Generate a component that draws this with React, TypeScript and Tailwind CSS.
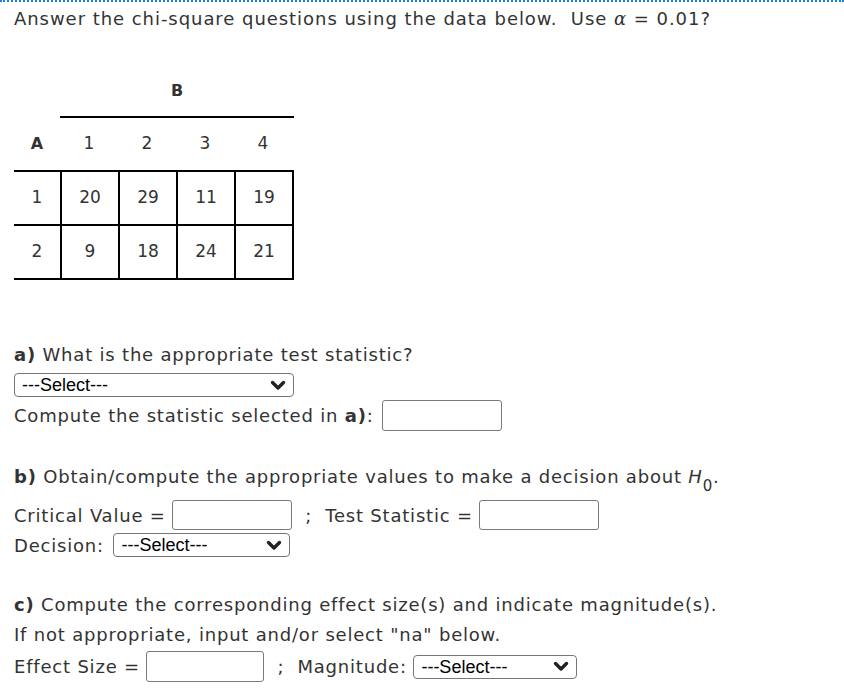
import React from "react";

const font = { fontFamily: '"DejaVu Sans", Verdana, sans-serif' };

function Select({ width }: { width: number }) {
  return (
    <div
      className="h-[24px] border border-[#767676] rounded-[4px] bg-white flex items-center justify-between pl-[7px] pr-[7px] text-[18px] text-black tracking-normal shrink-0"
      style={{ width, fontFamily: '"Liberation Sans", Arial, sans-serif' }}
    >
      <span className="leading-none">---Select---</span>
      <svg width="16" height="11" viewBox="0 0 16 11">
        <path d="M2.5 2.5 L8 8 L13.5 2.5" fill="none" stroke="#222" strokeWidth="3.4" strokeLinecap="round" strokeLinejoin="round" />
      </svg>
    </div>
  );
}

function Input({ width, height = 31 }: { width: number; height?: number }) {
  return (
    <div
      className="border border-[#7a7a7a] rounded-[3px] bg-white shrink-0"
      style={{ width, height }}
    />
  );
}

const H0 = () => (
  <span>
    <span className="italic">H</span>
    <sub className="text-[15px] align-[-4px]">0</sub>
  </span>
);

export default function App() {
  const rows = [
    ["1", "20", "29", "11", "19"],
    ["2", "9", "18", "24", "21"],
  ];
  return (
    <div className="w-[844px] h-[700px] bg-white text-[#333] text-[18px] tracking-[0.8px]" style={font}>
      <div className="border-t-2 border-dotted border-[#1a7fe0]" />
      <div className="px-[14px]">
        <div className="mt-[5px] h-[24px] leading-[24px] whitespace-nowrap tracking-[0.95px]">
          Answer the chi-square questions using the data below.&nbsp; Use{" "}
          <span className="italic" style={{ fontFamily: '"DejaVu Serif", serif' }}>α</span> = 0.01?
        </div>

        {/* table */}
        <div className="mt-[35px] w-[280px] text-[17px] tracking-normal">
          <div className="flex h-[52px]">
            <div className="w-[46px]" />
            <div className="w-[234px] h-[52px] border-b-2 border-black flex items-center justify-center font-bold text-[16px]">
              B
            </div>
          </div>
          <div className="flex h-[52px] items-center">
            <div className="w-[46px] text-center font-bold text-[16px]">A</div>
            {["1", "2", "3", "4"].map((c) => (
              <div key={c} className="w-[58px] text-center">{c}</div>
            ))}
          </div>
          {rows.map((r, i) => (
            <div key={i} className={`flex h-[54px] border-t-2 border-black ${i === rows.length - 1 ? "h-[56px] border-b-2" : ""}`}>
              {r.map((c, j) => (
                <div
                  key={j}
                  className={`${j === 0 ? "w-[46px]" : "w-[58px] border-l-2 border-black"} ${j === 4 ? "w-[60px] border-r-2" : ""} flex items-center justify-center`}
                >
                  {c}
                </div>
              ))}
            </div>
          ))}
        </div>

        {/* a */}
        <div className="mt-[63px] h-[24px] leading-[24px]">
          <span className="font-bold">a)</span> What is the appropriate test statistic?
        </div>
        <div className="mt-[6px]">
          <Select width={280} />
        </div>
        <div className="mt-[3px] h-[31px] flex items-center">
          <span className="whitespace-pre">
            Compute the statistic selected in <span className="font-bold">a)</span>:{" "}
          </span>
          <div className="ml-[2px]">
            <Input width={120} />
          </div>
        </div>

        {/* b */}
        <div className="mt-[34px] h-[24px] leading-[24px] whitespace-nowrap">
          <span className="font-bold">b)</span> Obtain/compute the appropriate values to make a decision about <H0 />.
        </div>
        <div className="mt-[11px] h-[30px] flex items-center">
          <span className="whitespace-pre">Critical Value = </span>
          <Input width={120} height={30} />
          <span className="whitespace-pre">{"  ;  Test Statistic = "}</span>
          <Input width={120} height={30} />
        </div>
        <div className="mt-[3px] h-[24px] flex items-center">
          <span className="whitespace-pre">Decision: </span>
          <div className="ml-[3px]">
            <Select width={177} />
          </div>
        </div>

        {/* c */}
        <div className="mt-[36px] h-[24px] leading-[24px] whitespace-nowrap">
          <span className="font-bold">c)</span> Compute the corresponding effect size(s) and indicate magnitude(s).
        </div>
        <div className="mt-[6px] h-[24px] leading-[24px]">
          If not appropriate, input and/or select "na" below.
        </div>
        <div className="mt-[4px] h-[31px] flex items-center">
          <span className="whitespace-pre">Effect Size = </span>
          <Input width={118} />
          <span className="whitespace-pre">{"  ;  Magnitude: "}</span>
          <Select width={164} />
        </div>
      </div>
    </div>
  );
}
